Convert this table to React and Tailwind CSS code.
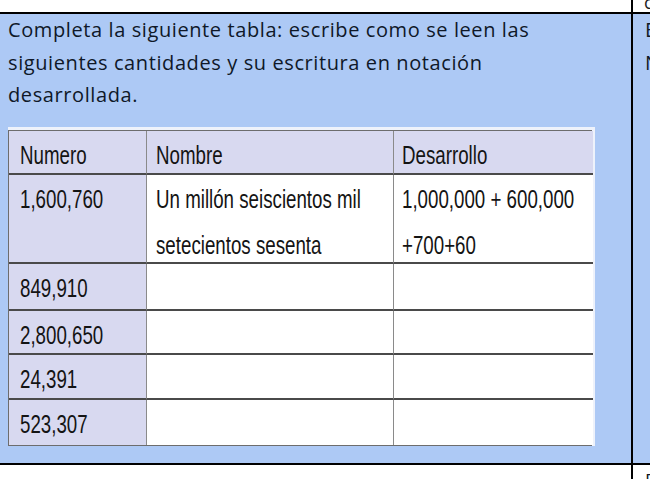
const rows = [
  { num: "1,600,760", nombre: ["Un millón seiscientos mil", "setecientos sesenta"], desarrollo: ["1,000,000 + 600,000", "+700+60"], h: "h-[89px]" },
  { num: "849,910", h: "h-[47px]" },
  { num: "2,800,650", h: "h-[44px]" },
  { num: "24,391", h: "h-[45px]" },
  { num: "523,307", h: "h-[45px]", last: true },
];

const cellFont = "font-['Liberation_Sans',Arial,sans-serif] text-[26px] leading-[44px] text-[#141414]";

const Cell = ({ className = "", lines = [], last }) => (
  <div className={`${className} ${last ? "" : "border-b-2 border-b-[#4a4a4a]"} overflow-hidden ${cellFont}`}>
    {lines.map((l, i) => (
      <div key={i} className="whitespace-nowrap origin-left scale-x-[0.72] pt-[2px]">{l}</div>
    ))}
  </div>
);

export default function App() {
  return (
    <div className="w-[650px] h-[481px] overflow-hidden bg-white font-['Open_Sans',sans-serif]">
      {/* top strip */}
      <div className="flex h-[12px]">
        <div className="w-[633px] border-r-2 border-black" />
        <div className="flex-1 overflow-hidden pl-[11px] text-[18px] leading-[12px] text-[#1c1c1c] -mt-[4px]">c</div>
      </div>

      {/* middle row */}
      <div className="flex h-[453px] border-y-2 border-black bg-[#adc9f5]">
        <div className="w-[633px] shrink-0 border-r-2 border-black pl-[8px]">
          <p className="text-[20px] tracking-[0.6px] leading-[32.5px] text-[#0f1828] whitespace-nowrap">
            Completa la siguiente tabla: escribe como se leen las
            <br />
            siguientes cantidades y su escritura en notación
            <br />
            desarrollada.
          </p>

          <div className="mt-[15px] w-[587px] border-t-[3px] border-r-[3px] border-[#eef2fb]">
            <div className="grid grid-cols-[138px_247px_199px] border border-[#6d6d6d] bg-white">
              <Cell className="h-[44px] bg-[#d8d9f0] border-r border-r-[#8a8a8a] pl-[11px]" lines={["Numero"]} />
              <Cell className="h-[44px] bg-[#d8d9f0] border-r border-r-[#8a8a8a] pl-[9px]" lines={["Nombre"]} />
              <Cell className="h-[44px] bg-[#d8d9f0] pl-[8px]" lines={["Desarrollo"]} />
              {rows.map((r) => (
                <>
                  <Cell key={r.num + "a"} className={`${r.h} bg-[#d8d9f0] border-r border-r-[#8a8a8a] pl-[11px]`} lines={[r.num]} last={r.last} />
                  <Cell key={r.num + "b"} className={`${r.h} bg-white border-r border-r-[#8a8a8a] pl-[9px]`} lines={r.nombre || []} last={r.last} />
                  <Cell key={r.num + "c"} className={`${r.h} bg-white pl-[8px]`} lines={r.desarrollo || []} last={r.last} />
                </>
              ))}
            </div>
          </div>
        </div>
        <div className="flex-1 overflow-hidden pl-[12px] text-[20px] leading-[32.5px] text-[#0f1828] whitespace-nowrap">
          <div>Escribe</div>
          <div>Nota</div>
        </div>
      </div>

      {/* bottom strip */}
      <div className="flex h-[14px]">
        <div className="w-[633px] border-r-2 border-black" />
        <div className="flex-1 overflow-hidden pl-[12px] text-[18px] leading-[24px] text-[#0f1828] pt-[3px]">D</div>
      </div>
    </div>
  );
}
